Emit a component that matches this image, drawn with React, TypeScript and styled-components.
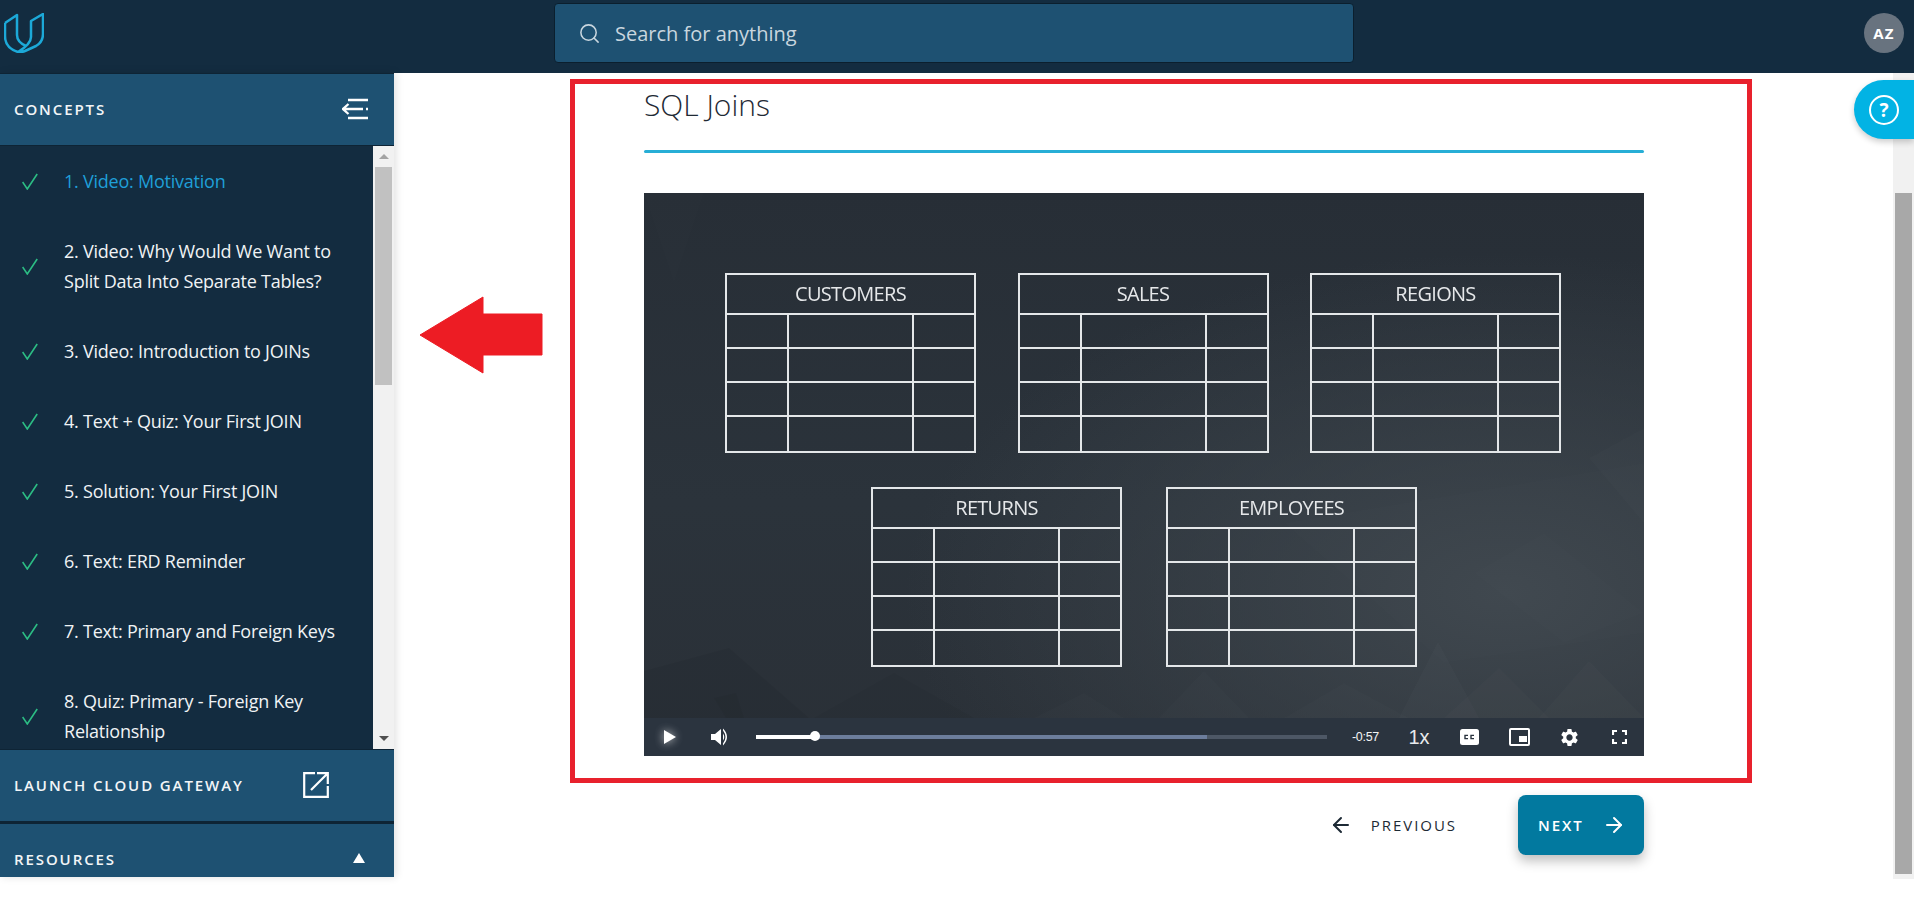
import React from "react";
import styled, { createGlobalStyle } from "styled-components";
import { MdSettings } from "react-icons/md";
import { ArrowLeft, ArrowRight, Search } from "lucide-react";

const GlobalStyle = createGlobalStyle`
  html, body { margin: 0; padding: 0; background: #fff; overflow: hidden; }
  body { font-family: "Open Sans", "Liberation Sans", sans-serif; }
  * { box-sizing: border-box; }
`;

const Page = styled.div`
  width: 1914px;
  height: 924px;
  display: flex;
  flex-direction: column;
  overflow: hidden;
`;

const TopBar = styled.header`
  height: 73px;
  flex: none;
  background: #132c40;
  display: grid;
  grid-template-columns: 554px 800px 1fr;
  align-items: center;
  padding-bottom: 7px;
`;

const LogoWrap = styled.div`
  padding-left: 4px;
  display: flex;
  align-items: center;
`;

const SearchBox = styled.div`
  height: 60px;
  background: #1e5172;
  border: 1px solid #0b1f2e;
  border-radius: 4px;
  display: flex;
  align-items: center;
  padding-left: 23px;
  gap: 14px;
  color: #c9d6df;
  font-size: 20px;
`;

const AvatarCell = styled.div`
  display: flex;
  justify-content: flex-end;
  padding-right: 10px;
`;

const Avatar = styled.div`
  width: 40px;
  height: 40px;
  border-radius: 50%;
  background: #68737f;
  color: #fff;
  font-size: 15px;
  font-weight: 700;
  letter-spacing: 1.2px;
  display: flex;
  align-items: center;
  justify-content: center;
`;

const Body = styled.div`
  position: relative;
  height: 806px;
  display: flex;
  flex: none;
`;

const Sidebar = styled.aside`
  width: 394px;
  height: 804px;
  flex: none;
  display: flex;
  flex-direction: column;
  box-shadow: 2px 0 8px rgba(0, 0, 0, 0.12);
  position: relative;
  z-index: 1;
`;

const PanelHead = styled.div<{ $h: number; $bottom: number }>`
  height: ${(p) => p.$h}px;
  flex: none;
  background: #1e5172;
  border-top: 1px solid #0e2435;
  border-bottom: ${(p) => p.$bottom}px solid #0e2435;
  display: flex;
  align-items: center;
  justify-content: space-between;
  padding: 0 0 2px 14px;
  color: #f2f5f7;
`;

const PanelFoot = styled.div`
  height: 53px;
  flex: none;
  background: #1e5172;
  display: flex;
  align-items: flex-start;
  justify-content: space-between;
  padding: 25px 29px 0 14px;
  color: #f2f5f7;
`;

const Caps = styled.span`
  font-size: 15px;
  line-height: 20px;
  font-weight: 600;
  letter-spacing: 1.9px;
`;

const ListArea = styled.div`
  height: 603px;
  flex: none;
  display: flex;
  background: #132c40;
`;

const ConceptList = styled.ol`
  list-style: none;
  margin: 0;
  padding: 1px 0 0;
  flex: 1;
  overflow: hidden;
`;

const ConceptItem = styled.li<{ $active?: boolean }>`
  display: flex;
  align-items: center;
  padding: 19px 26px 21px 22px;
  color: ${(p) => (p.$active ? "#1f9fd8" : "#f0f3f5")};
  font-size: 18px;
  line-height: 30px;
  letter-spacing: -0.23px;
`;

const CheckCell = styled.span`
  width: 42px;
  flex: none;
  display: flex;
  align-items: center;
`;

const SideTrack = styled.div`
  width: 21px;
  flex: none;
  background: #f1f1f1;
  display: flex;
  flex-direction: column;
  align-items: center;
`;

const TrackEnd = styled.div`
  height: 21px;
  flex: none;
  display: flex;
  align-items: center;
  justify-content: center;
`;

const Arrowhead = styled.i<{ $down?: boolean }>`
  display: block;
  border-left: 5px solid transparent;
  border-right: 5px solid transparent;
  ${(p) => (p.$down ? "border-top: 5px solid #505050;" : "border-bottom: 5px solid #a3a3a3;")}
`;

const SideThumb = styled.div`
  width: 17px;
  height: 218px;
  flex: none;
  background: #c1c1c1;
`;

const Spacer = styled.div`
  flex: 1;
`;

const Caret = styled.i`
  display: block;
  margin-top: 4px;
  border-left: 6px solid transparent;
  border-right: 6px solid transparent;
  border-bottom: 10px solid #fff;
`;

const Main = styled.main`
  flex: 1;
  display: flex;
  min-width: 0;
  position: relative;
`;

const Content = styled.div`
  width: 1000px;
  margin-left: 250px;
  flex: none;
`;

const Title = styled.h1`
  margin: 12px 0 0;
  height: 40px;
  font-size: 30px;
  line-height: 40px;
  font-weight: 300;
  color: #1f2a35;
`;

const Rule = styled.div`
  height: 3px;
  margin-top: 25px;
  border-radius: 2px;
  background: #27aed6;
`;

const Video = styled.div`
  position: relative;
  margin-top: 40px;
  height: 563px;
  padding-top: 80px;
  overflow: hidden;
  background:
    radial-gradient(ellipse 600px 340px at 860px 400px, #3f474e 0%, rgba(63, 71, 78, 0) 100%),
    linear-gradient(180deg, #272e36 0%, #2b333b 55%, #2a3037 100%);
`;

const Backdrop = styled.svg`
  position: absolute;
  inset: 0;
  width: 100%;
  height: 100%;
`;

const TableRow = styled.div<{ $gap: number; $shift: number }>`
  position: relative;
  display: flex;
  justify-content: center;
  gap: ${(p) => p.$gap}px;
  padding-right: ${(p) => p.$shift}px;
  margin-bottom: 34px;
`;

const DiagramTable = styled.div`
  width: 251px;
  height: 180px;
  border: 2px solid #e4e7e9;
  display: grid;
  grid-template-columns: 62px 125px 1fr;
  grid-template-rows: 40px repeat(4, 1fr);
  filter: blur(0.35px);
`;

const TableName = styled.div`
  grid-column: 1 / -1;
  display: flex;
  align-items: center;
  justify-content: center;
  padding-bottom: 1px;
  color: #e6e8ea;
  font-size: 20px;
  letter-spacing: -0.7px;
  border-bottom: 2px solid #e4e7e9;
`;

const TableCell = styled.div<{ $col: number; $row: number }>`
  border-right: ${(p) => (p.$col < 2 ? "2px solid #e4e7e9" : "none")};
  border-bottom: ${(p) => (p.$row < 3 ? "2px solid #e4e7e9" : "none")};
`;

const Controls = styled.div`
  position: absolute;
  left: 0;
  right: 0;
  bottom: 0;
  height: 38px;
  background: #2b343f;
  display: flex;
  align-items: center;
  color: #fff;
`;

const Control = styled.div`
  width: 50px;
  height: 38px;
  flex: none;
  display: flex;
  align-items: center;
  justify-content: center;
`;

const PlayGlow = styled(Control)`
  padding-left: 2px;
  & > svg {
    filter: drop-shadow(0 0 5px rgba(255, 255, 255, 0.75));
  }
`;

const VolumeCell = styled(Control)`
  padding-left: 3px;
`;

const Progress = styled.div`
  position: relative;
  flex: 1;
  height: 4px;
  margin: 0 0 0 12px;
  background: #4d5765;
`;

const Buffered = styled.div`
  position: absolute;
  left: 0;
  top: 0;
  bottom: 0;
  background: #6c7d9c;
`;

const Played = styled.div`
  position: absolute;
  left: 0;
  top: 0;
  bottom: 0;
  background: #fff;
`;

const Handle = styled.div`
  position: absolute;
  top: -4px;
  margin-left: -5px;
  width: 10px;
  height: 10px;
  border-radius: 50%;
  background: #fff;
`;

const TimeCell = styled.div`
  width: 67px;
  flex: none;
  padding-left: 25px;
  font-family: "Liberation Sans", Arial, sans-serif;
  font-size: 12.5px;
  letter-spacing: -0.3px;
  color: #f4f5f6;
`;

const Speed = styled(Control)`
  font-family: "Liberation Sans", Arial, sans-serif;
  font-size: 20px;
  color: #e9ebed;
`;

const Pager = styled.nav`
  margin-top: 39px;
  display: flex;
  justify-content: flex-end;
  align-items: center;
`;

const PrevLink = styled.div`
  display: flex;
  align-items: center;
  gap: 18px;
  margin-right: 61px;
  color: #1d2a35;
`;

const PagerLabel = styled.span<{ $strong?: boolean }>`
  font-size: 15px;
  font-weight: ${(p) => (p.$strong ? 600 : 400)};
  letter-spacing: 1.95px;
`;

const NextButton = styled.div`
  width: 126px;
  height: 60px;
  border-radius: 8px;
  background: #02799f;
  color: #fff;
  display: flex;
  align-items: center;
  justify-content: flex-start;
  gap: 18px;
  padding-left: 20px;
  box-shadow: 0 6px 12px rgba(0, 0, 0, 0.25);
`;

const MainTrack = styled.div`
  width: 21px;
  margin-left: auto;
  flex: none;
  background: #f1f1f1;
  padding: 120px 2px 5px 2px;
  display: flex;
`;

const MainThumb = styled.div`
  flex: 1;
  background: #a8a8a8;
`;

const HelpTab = styled.div`
  position: absolute;
  right: 0;
  top: 7px;
  width: 60px;
  height: 59px;
  border-radius: 30px 0 0 30px;
  background: #02b3e4;
  box-shadow: 0 3px 6px rgba(0, 0, 0, 0.2);
  display: flex;
  align-items: center;
  padding-left: 15px;
  color: #fff;
`;

const HelpMark = styled.span`
  width: 30px;
  height: 30px;
  border: 2px solid #fff;
  border-radius: 50%;
  display: flex;
  align-items: center;
  justify-content: center;
  font-size: 19px;
  font-weight: 700;
`;

const RedFrame = styled.div`
  position: absolute;
  left: 176px;
  top: 6px;
  width: 1182px;
  height: 704px;
  border: 5px solid #e8212d;
  pointer-events: none;
`;

const RedArrow = styled.svg`
  position: absolute;
  left: 25px;
  top: 223px;
`;

const LESSONS = [
  "1. Video: Motivation",
  "2. Video: Why Would We Want to Split Data Into Separate Tables?",
  "3. Video: Introduction to JOINs",
  "4. Text + Quiz: Your First JOIN",
  "5. Solution: Your First JOIN",
  "6. Text: ERD Reminder",
  "7. Text: Primary and Foreign Keys",
  "8. Quiz: Primary - Foreign Key Relationship",
];

const POLYGONS: [string, string][] = [
  ["1000,235 945,265 1000,330", "rgba(255,255,255,.012)"],
  ["640,330 1000,270 1000,440 800,470", "rgba(255,255,255,.008)"],
  ["794,449 755,525 835,525", "rgba(255,255,255,.02)"],
  ["855,475 800,525 905,525", "rgba(255,255,255,.016)"],
  ["945,468 895,525 1000,525", "rgba(255,255,255,.014)"],
  ["700,490 640,525 765,525", "rgba(255,255,255,.012)"],
  ["560,478 515,525 605,525", "rgba(255,255,255,.012)"],
  ["440,500 390,525 480,525", "rgba(255,255,255,.01)"],
  ["0,478 85,455 165,525 0,525", "rgba(0,0,0,.05)"],
  ["70,505 82,525 100,525 92,500", "rgba(0,0,0,.04)"],
  ["0,0 60,0 30,90", "rgba(255,255,255,.008)"],
  ["170,525 250,480 330,525", "rgba(0,0,0,.035)"],
  ["830,380 900,340 1000,420 920,450", "rgba(255,255,255,.008)"],
];

function Logo() {
  return (
    <svg width="40" height="40" viewBox="4 13 40 40" fill="none" stroke="#1ca9d8" strokeWidth="2.5" strokeLinejoin="round">
      <path d="M5 23 L17 15 V35 Q17 42 26 46" />
      <path d="M5 23 V36 Q5 48 18 52 Q21 52.6 25 51 L36 46 Q43 42 43 34 V14 L31 21 V37 Q31 44 18 52" />
    </svg>
  );
}

function Collapse() {
  return (
    <svg width="28" height="22" viewBox="343 98 28 22" fill="none" stroke="#fff" strokeWidth="2.3" style={{ marginRight: 24 }}>
      <path d="M349 100 H369 M349 118 H369 M344 109 H364 M349.5 104 L344 109 L349.5 114" />
      <path d="M367 109 H369" />
    </svg>
  );
}

function Check() {
  return (
    <svg width="16" height="17" viewBox="0 0 16 17" fill="none" stroke="#2cbd84" strokeWidth="1.6">
      <path d="M0.6 9 L5.3 16 L15.2 1" />
    </svg>
  );
}

function OpenExternal() {
  return (
    <svg width="26" height="26" viewBox="0 0 26 26" fill="none" stroke="#fff" strokeWidth="2.2" style={{ marginRight: 65 }}>
      <path d="M12 1.2 H1.2 V24.8 H24.8 V14" />
      <path d="M8 18 L24 2 M14 1.2 H24.8 V12" />
    </svg>
  );
}

function Play() {
  return (
    <svg width="12" height="14" viewBox="0 0 12 14" fill="#fff">
      <path d="M0 0 L12 7 L0 14 Z" />
    </svg>
  );
}

function Volume() {
  return (
    <svg width="20" height="18" viewBox="0 0 20 18" fill="#fff">
      <path d="M0 6 H4 L10 1 V17 L4 12 H0 Z" />
      <path d="M12 5.5 Q14.5 9 12 12.5 Z" />
      <path d="M12 .5 Q20 9 12 17.5 V15.6 Q17 9 12 2.4 Z" />
    </svg>
  );
}

function CaptionIcon() {
  return (
    <svg width="19" height="16" viewBox="0 0 19 16">
      <rect width="19" height="16" rx="2.5" fill="#fff" />
      <path d="M8 6.4 H5 V9.6 H8 M14 6.4 H11 V9.6 H14" fill="none" stroke="#2a333e" strokeWidth="1.4" />
    </svg>
  );
}

function PipIcon() {
  return (
    <svg width="21" height="18" viewBox="0 0 21 18">
      <rect x="1" y="1" width="19" height="16" rx="1" fill="none" stroke="#fff" strokeWidth="2" />
      <rect x="10" y="8" width="8" height="6" fill="#fff" />
    </svg>
  );
}

function FullscreenIcon() {
  return (
    <svg width="15" height="14" viewBox="0 0 15 14" fill="none" stroke="#fff" strokeWidth="2.2">
      <path d="M1 5 V1 H5 M10 1 H14 V5 M14 9 V13 H10 M5 13 H1 V9" />
    </svg>
  );
}

function SchemaTable({ name }: { name: string }) {
  return (
    <DiagramTable>
      <TableName>{name}</TableName>
      {[0, 1, 2, 3].flatMap((row) =>
        [0, 1, 2].map((col) => <TableCell key={`${row}-${col}`} $row={row} $col={col} />)
      )}
    </DiagramTable>
  );
}

export default function App() {
  return (
    <Page>
      <GlobalStyle />
      <TopBar>
        <LogoWrap>
          <Logo />
        </LogoWrap>
        <SearchBox>
          <Search size={23} strokeWidth={1.6} />
          <span>Search for anything</span>
        </SearchBox>
        <AvatarCell>
          <Avatar>AZ</Avatar>
        </AvatarCell>
      </TopBar>
      <Body>
        <Sidebar>
          <PanelHead $h={73} $bottom={1}>
            <Caps>CONCEPTS</Caps>
            <Collapse />
          </PanelHead>
          <ListArea>
            <ConceptList>
              {LESSONS.map((lesson, i) => (
                <ConceptItem key={lesson} $active={i === 0}>
                  <CheckCell>
                    <Check />
                  </CheckCell>
                  <span>{lesson}</span>
                </ConceptItem>
              ))}
            </ConceptList>
            <SideTrack>
              <TrackEnd>
                <Arrowhead />
              </TrackEnd>
              <SideThumb />
              <Spacer />
              <TrackEnd>
                <Arrowhead $down />
              </TrackEnd>
            </SideTrack>
          </ListArea>
          <PanelHead $h={75} $bottom={3}>
            <Caps>LAUNCH CLOUD GATEWAY</Caps>
            <OpenExternal />
          </PanelHead>
          <PanelFoot>
            <Caps>RESOURCES</Caps>
            <Caret />
          </PanelFoot>
        </Sidebar>
        <Main>
          <Content>
            <Title>SQL Joins</Title>
            <Rule />
            <Video>
              <Backdrop viewBox="0 0 1000 563" preserveAspectRatio="none">
                {POLYGONS.map(([points, fill]) => (
                  <polygon key={points} points={points} fill={fill} />
                ))}
              </Backdrop>
              <TableRow $gap={41.5} $shift={2}>
                <SchemaTable name="CUSTOMERS" />
                <SchemaTable name="SALES" />
                <SchemaTable name="REGIONS" />
              </TableRow>
              <TableRow $gap={44} $shift={0}>
                <SchemaTable name="RETURNS" />
                <SchemaTable name="EMPLOYEES" />
              </TableRow>
              <Controls>
                <PlayGlow>
                  <Play />
                </PlayGlow>
                <VolumeCell>
                  <Volume />
                </VolumeCell>
                <Progress>
                  <Buffered style={{ width: "79%" }} />
                  <Played style={{ width: "10.3%" }} />
                  <Handle style={{ left: "10.3%" }} />
                </Progress>
                <TimeCell>-0:57</TimeCell>
                <Speed>1x</Speed>
                <Control>
                  <CaptionIcon />
                </Control>
                <Control>
                  <PipIcon />
                </Control>
                <Control>
                  <MdSettings size={21} />
                </Control>
                <Control>
                  <FullscreenIcon />
                </Control>
              </Controls>
            </Video>
            <Pager>
              <PrevLink>
                <ArrowLeft size={24} strokeWidth={2} />
                <PagerLabel>PREVIOUS</PagerLabel>
              </PrevLink>
              <NextButton>
                <PagerLabel $strong>NEXT</PagerLabel>
                <ArrowRight size={24} strokeWidth={2} />
              </NextButton>
            </Pager>
          </Content>
          <MainTrack>
            <MainThumb />
          </MainTrack>
          <RedFrame />
          <RedArrow width="124" height="78" viewBox="0 0 124 78">
            <path d="M1 39 L64 1 V18 H123 V59 H64 V77 Z" fill="#ed1c24" stroke="#ed1c24" strokeLinejoin="round" />
          </RedArrow>
        </Main>
        <HelpTab>
          <HelpMark>?</HelpMark>
        </HelpTab>
      </Body>
    </Page>
  );
}
